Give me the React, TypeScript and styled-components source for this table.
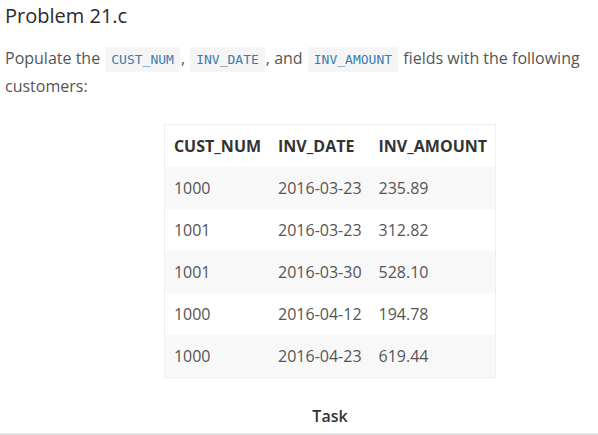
import React from "react";
import styled, { createGlobalStyle } from "styled-components";

const Global = createGlobalStyle`
  html, body { margin: 0; padding: 0; background: #fff; overflow: hidden; }
  body { font-family: "Open Sans", "Liberation Sans", sans-serif; }
`;

const Page = styled.div`
  width: 598px;
  height: 435px;
  position: relative;
  overflow: hidden;
  display: flex;
  flex-direction: column;
`;

const Title = styled.h2`
  margin: 0;
  padding: 2px 0 0 5px;
  font-size: 20px;
  line-height: 28px;
  font-weight: 500;
  color: #2a2a2a;
`;

const Para = styled.p`
  margin: 14px 0 0 0;
  padding: 0 5px;
  font-size: 16px;
  line-height: 28px;
  color: #555;
`;

const Code = styled.code`
  font-family: "DejaVu Sans Mono", "Liberation Mono", monospace;
  font-size: 13px;
  line-height: 1;
  color: #3a7cb0;
  background: #f5f5f5;
  padding: 5px 6px;
  border-radius: 2px;
  margin: 0 1px;
`;

const Center = styled.div`
  width: 660px;
  display: flex;
  flex-direction: column;
  align-items: center;
`;

const Table = styled.table`
  margin-top: 24px;
  border-collapse: collapse;
  border: 1px solid #efefef;
  font-size: 16px;
`;

const Th = styled.th`
  text-align: left;
  font-weight: 700;
  color: #333;
  height: 42px;
  padding: 0 8px 0 9px;
  white-space: nowrap;
`;

const Tr = styled.tr<{ $shade: boolean }>`
  background: ${(p) => (p.$shade ? "#f8f8f8" : "#fff")};
`;

const Td = styled.td`
  color: #555;
  height: 42px;
  padding: 0 8px 0 9px;
  white-space: nowrap;
`;

const Task = styled.div`
  margin-top: 24px;
  font-size: 16px;
  font-weight: 600;
  color: #333;
  line-height: 28px;
`;

const Rule = styled.div`
  position: absolute;
  left: 0;
  right: 0;
  top: 433px;
  height: 2px;
  background: #e3e3e3;
`;

const rows = [
  ["1000", "2016-03-23", "235.89"],
  ["1001", "2016-03-23", "312.82"],
  ["1001", "2016-03-30", "528.10"],
  ["1000", "2016-04-12", "194.78"],
  ["1000", "2016-04-23", "619.44"],
];

export default function App() {
  return (
    <Page>
      <Global />
      <Title>Problem 21.c</Title>
      <Para>
        Populate the <Code>CUST_NUM</Code>, <Code>INV_DATE</Code>, and{" "}
        <Code>INV_AMOUNT</Code> fields with the following customers:
      </Para>
      <Center>
        <Table>
          <thead>
            <tr>
              <Th>CUST_NUM</Th>
              <Th>INV_DATE</Th>
              <Th>INV_AMOUNT</Th>
            </tr>
          </thead>
          <tbody>
            {rows.map((r, i) => (
              <Tr key={i} $shade={i % 2 === 0}>
                {r.map((c, j) => (
                  <Td key={j}>{c}</Td>
                ))}
              </Tr>
            ))}
          </tbody>
        </Table>
        <Task>Task</Task>
      </Center>
      <Rule />
    </Page>
  );
}
